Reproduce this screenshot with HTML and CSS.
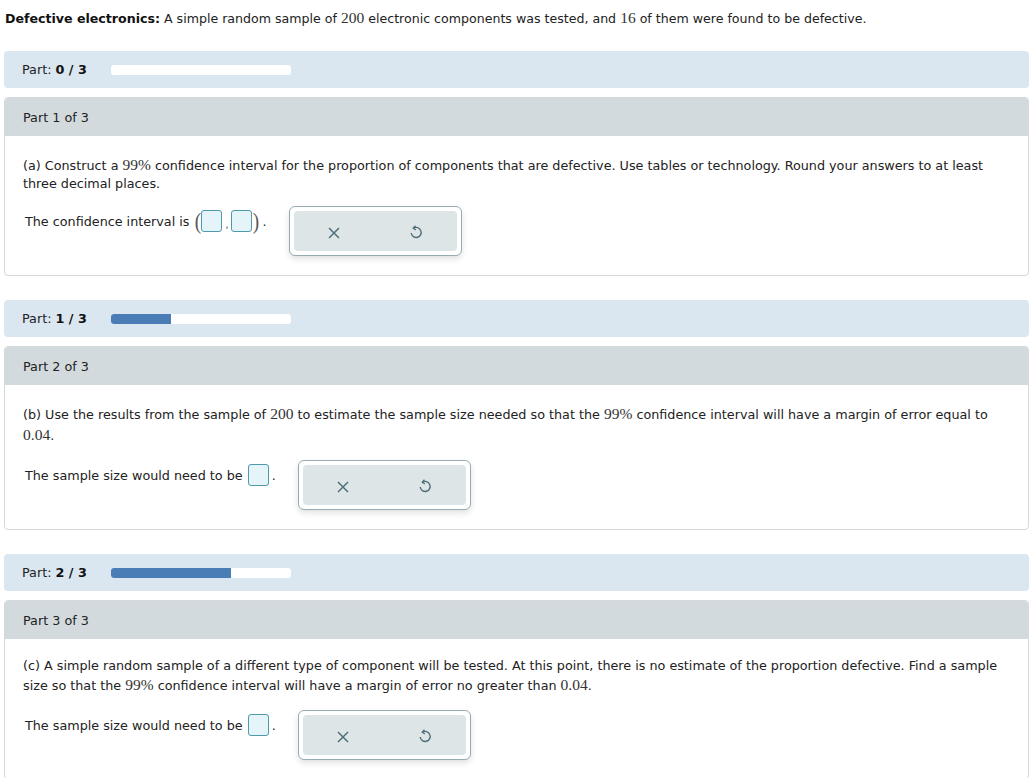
FILE: index.html
```html
<!DOCTYPE html>
<html>
<head>
<meta charset="utf-8">
<link rel="stylesheet" href="styles.css">
</head>
<body>
<div class="page">
  <p class="intro"><b>Defective electronics:</b> A simple random sample of <span class="m">200</span> electronic components was tested, and <span class="m">16</span> of them were found to be defective.</p>

  <div class="progress">
    <span class="plabel">Part: <b>0 / 3</b></span>
    <div class="track"><div class="fill" style="width:0%"></div></div>
  </div>
  <div class="card">
    <div class="card-head">Part 1 of 3</div>
    <div class="card-body body-a">
      <p class="q">(a) Construct a <span class="m">99%</span> confidence interval for the proportion of components that are defective. Use tables or technology. Round your answers to at least three decimal places.</p>
      <div class="ans">
        <div class="ans-line">
          <span class="ans-text">The confidence interval is</span>
          <span class="paren">(</span><span class="box"></span><span class="comma">,</span><span class="box"></span><span class="paren">)</span><span class="dot">.</span>
        </div>
        <div class="tools">
          <div class="tools-in">
            <span class="tbtn"><svg width="14" height="14" viewBox="0 0 14 14"><path d="M2 2 L12 12 M12 2 L2 12" stroke="#4f6f79" stroke-width="1.5" fill="none"/></svg></span>
            <span class="tbtn"><svg width="14" height="16" viewBox="0 0 14 16"><path d="M4.5 3.2 A5 5 0 1 1 2.2 8" stroke="#4f6f79" stroke-width="1.4" fill="none"/><path d="M6.5 0.8 L4.3 3.2 L6.8 5" stroke="#4f6f79" stroke-width="1.4" fill="none"/></svg></span>
          </div>
        </div>
      </div>
    </div>
  </div>

  <div class="progress">
    <span class="plabel">Part: <b>1 / 3</b></span>
    <div class="track"><div class="fill" style="width:33.3%"></div></div>
  </div>
  <div class="card">
    <div class="card-head">Part 2 of 3</div>
    <div class="card-body body-b">
      <p class="q q-tall">(b) Use the results from the sample of <span class="m">200</span> to estimate the sample size needed so that the <span class="m">99%</span> confidence interval will have a margin of error equal to <span class="m">0.04</span>.</p>
      <div class="ans">
        <div class="ans-line">
          <span class="ans-text">The sample size would need to be</span>
          <span class="box"></span><span class="dot">.</span>
        </div>
        <div class="tools">
          <div class="tools-in">
            <span class="tbtn"><svg width="14" height="14" viewBox="0 0 14 14"><path d="M2 2 L12 12 M12 2 L2 12" stroke="#4f6f79" stroke-width="1.5" fill="none"/></svg></span>
            <span class="tbtn"><svg width="14" height="16" viewBox="0 0 14 16"><path d="M4.5 3.2 A5 5 0 1 1 2.2 8" stroke="#4f6f79" stroke-width="1.4" fill="none"/><path d="M6.5 0.8 L4.3 3.2 L6.8 5" stroke="#4f6f79" stroke-width="1.4" fill="none"/></svg></span>
          </div>
        </div>
      </div>
    </div>
  </div>

  <div class="progress">
    <span class="plabel">Part: <b>2 / 3</b></span>
    <div class="track"><div class="fill" style="width:66.6%"></div></div>
  </div>
  <div class="card">
    <div class="card-head">Part 3 of 3</div>
    <div class="card-body body-c">
      <p class="q q-mid">(c) A simple random sample of a different type of component will be tested. At this point, there is no estimate of the proportion defective. Find a sample size so that the <span class="m">99%</span> confidence interval will have a margin of error no greater than <span class="m">0.04</span>.</p>
      <div class="ans">
        <div class="ans-line">
          <span class="ans-text">The sample size would need to be</span>
          <span class="box"></span><span class="dot">.</span>
        </div>
        <div class="tools">
          <div class="tools-in">
            <span class="tbtn"><svg width="14" height="14" viewBox="0 0 14 14"><path d="M2 2 L12 12 M12 2 L2 12" stroke="#4f6f79" stroke-width="1.5" fill="none"/></svg></span>
            <span class="tbtn"><svg width="14" height="16" viewBox="0 0 14 16"><path d="M4.5 3.2 A5 5 0 1 1 2.2 8" stroke="#4f6f79" stroke-width="1.4" fill="none"/><path d="M6.5 0.8 L4.3 3.2 L6.8 5" stroke="#4f6f79" stroke-width="1.4" fill="none"/></svg></span>
          </div>
        </div>
      </div>
    </div>
  </div>
</div>
</body>
</html>
```

FILE: styles.css
```css
html, body {
  margin: 0;
  padding: 0;
  background: #ffffff;
}
body {
  font-family: "DejaVu Sans", Verdana, sans-serif;
  font-size: 12.75px;
  color: #222;
}
.page {
  padding: 0 6px 40px 4px;
}
.intro {
  margin: 0;
  padding: 9px 0 0 1px;
  line-height: 17px;
  font-size: 12.6px;
  color: #222;
}
.intro b {
  color: #111;
}
.m {
  font-family: "Liberation Serif", "DejaVu Serif", serif;
  font-size: 15.5px;
  color: #333;
}
.progress {
  margin-top: 24px;
  height: 37px;
  background: #dae6f0;
  border-radius: 4px;
  display: flex;
  align-items: center;
  padding-left: 18px;
}
.plabel {
  width: 89px;
  color: #222;
}
.plabel b {
  color: #111;
}
.track {
  width: 180px;
  height: 10px;
  background: #fff;
  border-radius: 3px;
  overflow: hidden;
}
.fill {
  height: 100%;
  background: #4a7db6;
}
.card {
  margin-top: 9px;
  border: 1px solid #d3d9db;
  border-radius: 4px;
  overflow: hidden;
}
.card-head {
  height: 38px;
  background: #d2dadd;
  display: flex;
  align-items: center;
  padding-left: 18px;
  color: #222;
}
.card-body {
  padding: 19px 18px 19px 18px;
}
.body-a {
  padding-top: 20px;
  padding-bottom: 19px;
}
.body-b {
  padding-top: 19px;
  padding-bottom: 19px;
}
.body-c {
  padding-top: 17px;
}
.q {
  margin: 0;
  line-height: 18px;
}
.q-tall {
  line-height: 20px;
}
.q-mid {
  line-height: 19px;
}
.ans {
  display: flex;
  align-items: flex-start;
  margin-top: 13px;
  padding-left: 2px;
}
.q-tall + .ans {
  margin-top: 14px;
}
.q-mid + .ans {
  margin-top: 15px;
}
.ans-line {
  display: flex;
  align-items: center;
  height: 22px;
  margin-top: 4px;
}
.ans-text {
  margin-right: 5px;
}
.paren {
  font-family: "Liberation Serif", "DejaVu Serif", serif;
  font-size: 24px;
  color: #555;
  line-height: 22px;
  display: inline-block;
  transform: scaleX(0.8);
  margin: 0 -1px 0 0;
}
.box {
  display: inline-block;
  width: 19px;
  height: 20px;
  background: #e5f4f8;
  border: 1px solid #4d9aaa;
  border-radius: 3px;
}
.comma {
  width: 9px;
  height: 22px;
  font-size: 10px;
  line-height: 30px;
  text-align: center;
  color: #555;
}
.dot {
  margin-left: 3px;
  margin-right: 22px;
}
.tools {
  width: 163px;
  height: 40px;
  padding: 4px;
  border: 1px solid #95acb4;
  border-radius: 6px;
  background: #fff;
  box-shadow: 0 3px 6px rgba(0, 0, 0, 0.12);
  display: flex;
}
.tools-in {
  flex: 1;
  background: #dee5e7;
  border-radius: 4px;
  display: flex;
}
.tbtn {
  flex: 1;
  display: flex;
  align-items: center;
  justify-content: center;
  padding-top: 3px;
}
```
